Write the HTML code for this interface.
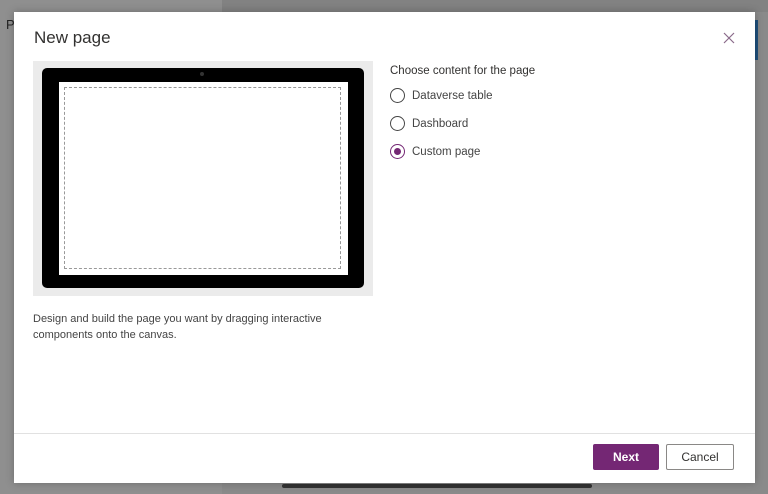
<!DOCTYPE html>
<html><head><style>
body{margin:0;width:768px;height:494px;background:#8a8a8a;position:relative;overflow:hidden;font-family:"Segoe UI","Liberation Sans",sans-serif;}
.bgl{position:absolute;left:0;top:0;width:222px;height:494px;background:#8f8f8f}
.bgt{position:absolute;left:222px;top:0;width:546px;height:12px;background:#828282}
.dlg{position:absolute;left:14px;top:12px;width:741px;height:471px;background:#fff;box-shadow:0 0 8px rgba(0,0,0,.25)}
.t{position:absolute;left:20px;top:16px;font-size:17px;color:#323130}
.x{position:absolute;left:709px;top:20px}
.img{position:absolute;left:19px;top:49px;width:340px;height:235px;background:#ebebeb}
.tab{position:absolute;left:9px;top:7px;width:322px;height:220px;background:#000;border-radius:5px}
.scr{position:absolute;left:17px;top:14px;width:289px;height:193px;background:#fff}
.dash{position:absolute;left:5px;top:5px;width:275px;height:180px;border:1px dashed #999}
.cam{position:absolute;left:158px;top:4px;width:4px;height:4px;border-radius:50%;background:#333}
.desc{position:absolute;left:19px;top:299px;font-size:11px;line-height:16px;color:#444;width:330px}
.h{position:absolute;left:376px;top:53px;font-size:11.5px;color:#323130}
.r{position:absolute;left:376px;font-size:11.5px;color:#444;display:flex;align-items:center}
.c{width:15px;height:15px;border:1px solid #444;border-radius:50%;margin-right:7px;position:relative;box-sizing:border-box}
.c.on{border-color:#742774}
.c.on:after{content:"";position:absolute;left:3px;top:3px;width:7px;height:7px;border-radius:50%;background:#742774}
.ft{position:absolute;left:0;top:421px;width:741px;height:1px;background:#e1e1e1}
.b{position:absolute;top:432px;height:26px;box-sizing:border-box;font-size:12px;display:flex;align-items:center;justify-content:center;border-radius:2px}
</style></head><body>
<div class="bgl"></div><div class="bgt"></div>
<div style="position:absolute;left:755px;top:20px;width:3px;height:40px;background:#1e4f7c"></div>
<div style="position:absolute;left:282px;top:484px;width:310px;height:4px;background:#333;border-radius:2px"></div>
<div style="position:absolute;left:6px;top:17px;font-size:13px;color:#222">P</div>
<div class="dlg">
<div class="t">New page</div>
<svg class="x" width="12" height="12" viewBox="0 0 12 12"><path d="M1 1L11 11M11 1L1 11" stroke="#8a6a8a" stroke-width="1.2"/></svg>
<div class="img"><div class="tab"><div class="cam"></div><div class="scr"><div class="dash"></div></div></div></div>
<div class="desc">Design and build the page you want by dragging interactive components onto the canvas.</div>
<div class="h">Choose content for the page</div>
<div class="r" style="top:76px"><div class="c"></div>Dataverse table</div>
<div class="r" style="top:104px"><div class="c"></div>Dashboard</div>
<div class="r" style="top:132px"><div class="c on"></div>Custom page</div>
<div class="ft"></div>
<div class="b" style="left:579px;width:66px;background:#742774;color:#fff;font-weight:600">Next</div>
<div class="b" style="left:652px;width:68px;border:1px solid #8a8886;color:#323130">Cancel</div>
</div>
</body></html>
